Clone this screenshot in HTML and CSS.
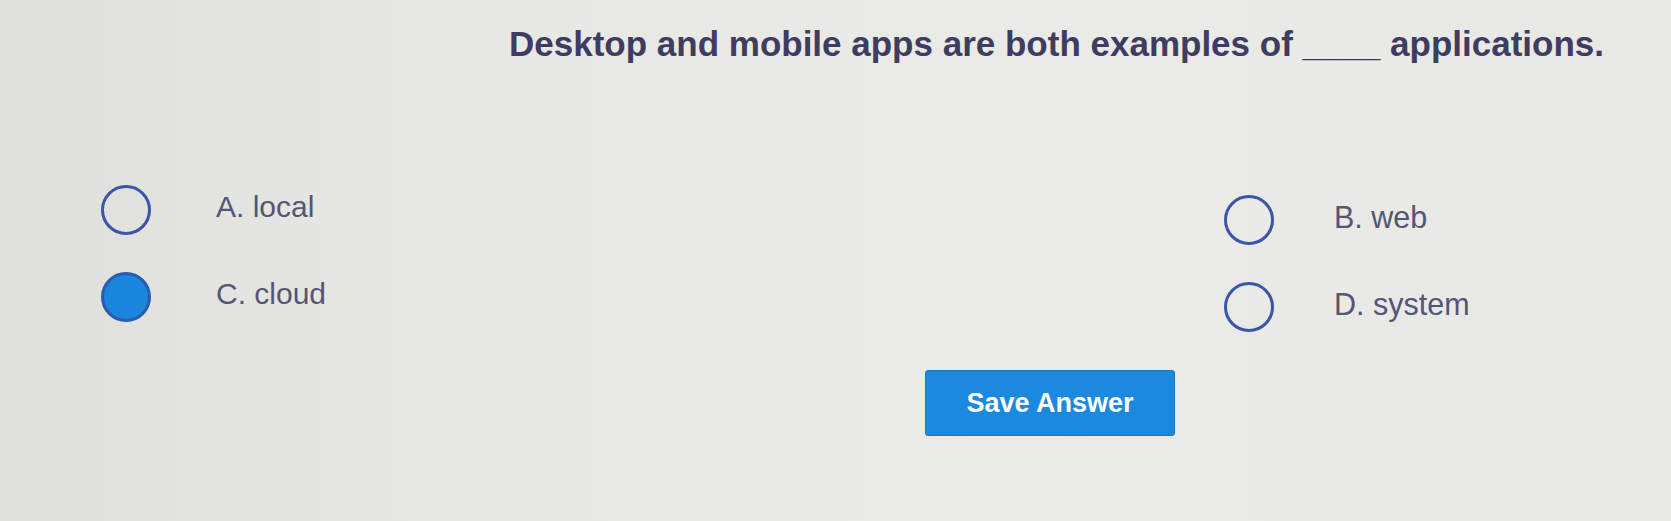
FILE: index.html
```html
<!DOCTYPE html>
<html lang="en">
<head>
<meta charset="utf-8">
<title>Question</title>
<link rel="stylesheet" href="styles.css">
</head>
<body>
<main class="page">
  <h1 class="question">Desktop and mobile apps are both examples of ____ applications.</h1>
  <div class="options">
    <div class="col">
      <label class="option"><span class="radio"></span><span class="label">A. local</span></label>
      <label class="option"><span class="radio checked"></span><span class="label">C. cloud</span></label>
    </div>
    <div class="col col-right">
      <label class="option"><span class="radio"></span><span class="label">B. web</span></label>
      <label class="option"><span class="radio"></span><span class="label">D. system</span></label>
    </div>
  </div>
  <div class="actions">
    <button class="save" type="button">Save Answer</button>
  </div>
</main>
</body>
</html>
```

FILE: styles.css
```css
html, body {
  margin: 0;
  padding: 0;
}
body {
  width: 1671px;
  height: 521px;
  overflow: hidden;
  background: linear-gradient(90deg, #dfdfdb 0%, #e7e7e3 25%, #eaeae6 60%, #e8e8e4 100%);
  font-family: "Liberation Sans", Arial, sans-serif;
}
.page {
  display: flex;
  flex-direction: column;
}
.question {
  margin: 0;
  padding: 26px 0 0 509px;
  font-size: 35px;
  line-height: 1;
  font-weight: 700;
  color: #3e3c60;
  white-space: nowrap;
}
.options {
  display: grid;
  grid-template-columns: 1123px auto;
  margin-top: 124px;
  padding-left: 101px;
}
.col {
  display: flex;
  flex-direction: column;
  gap: 37px;
}
.col-right {
  margin-top: 10px;
}
.option {
  display: flex;
  align-items: center;
  gap: 65px;
  height: 50px;
}
.col-right .option {
  gap: 60px;
}
.col-right .label {
  font-size: 30.5px;
}
.radio {
  box-sizing: border-box;
  width: 50px;
  height: 50px;
  border-radius: 50%;
  border: 3px solid #3b55a9;
  background: transparent;
  flex: none;
}
.radio.checked {
  background: #1a86dc;
  border-color: #2a5cb0;
}
.label {
  font-size: 30px;
  line-height: 1;
  color: #545578;
  margin-bottom: 6px;
}
.actions {
  padding-left: 925px;
  margin-top: 38px;
}
.save {
  width: 250px;
  height: 66px;
  border: 1px solid #1577c4;
  border-radius: 3px;
  background: #1a89df;
  color: #ffffff;
  font-family: "Liberation Sans", Arial, sans-serif;
  font-weight: 700;
  font-size: 27px;
  cursor: pointer;
}
```
